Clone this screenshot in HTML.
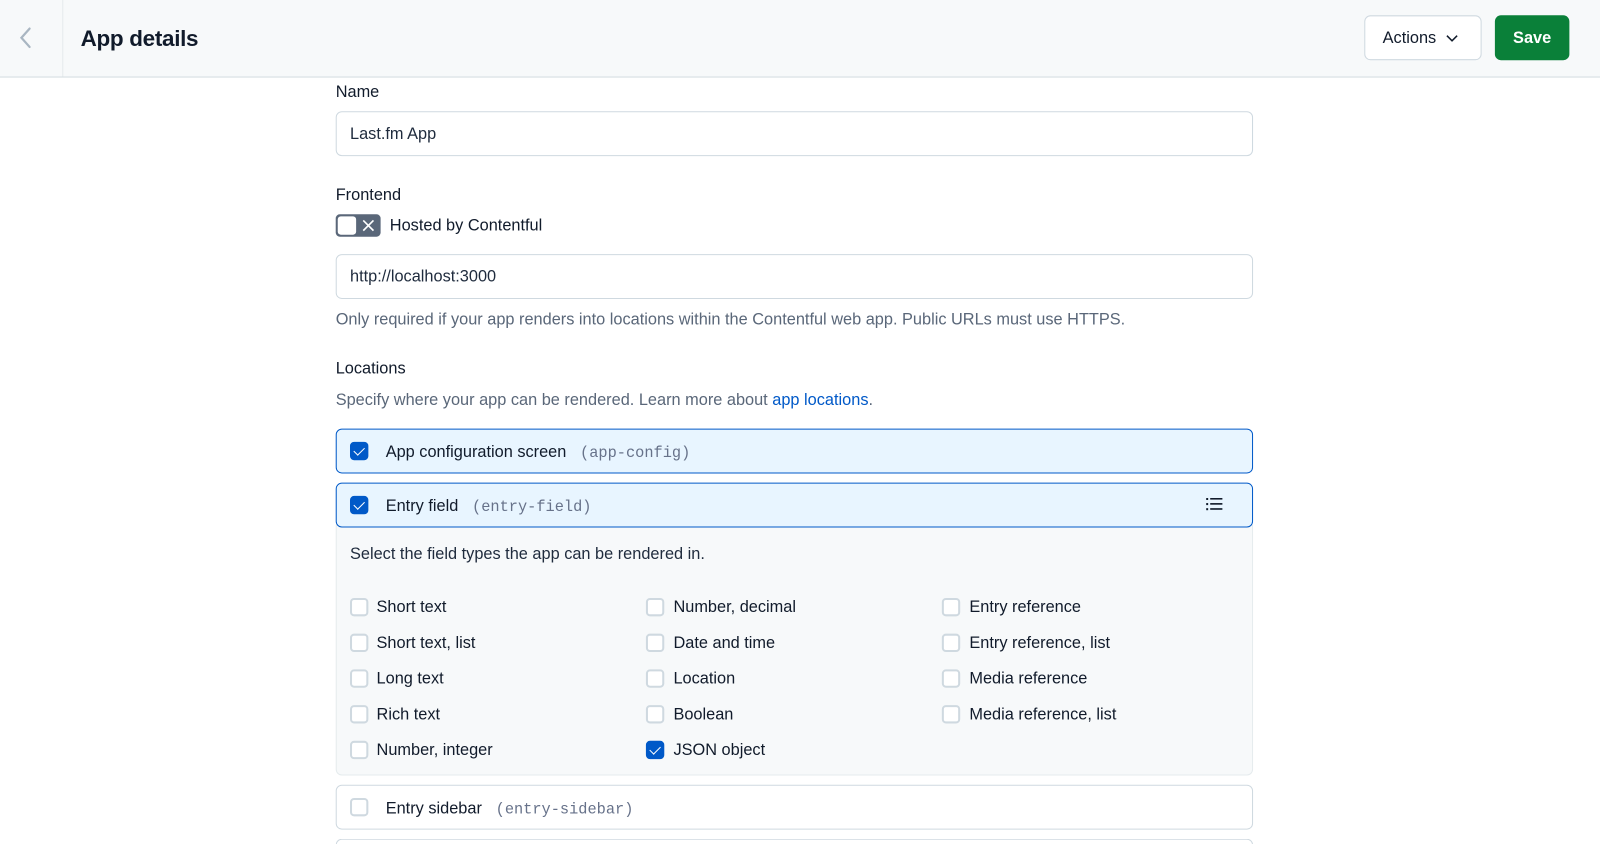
<!DOCTYPE html>
<html style="width:1600px;height:844px;overflow:hidden"><head><meta charset="utf-8"><style>
*{box-sizing:border-box;margin:0;padding:0}
body{width:1600px;height:844px;overflow:hidden;background:#fff;font-family:"Liberation Sans",sans-serif;color:#111b2b;font-size:16px;position:relative}
#w{position:absolute;left:0;top:0;width:1600px;height:844px;transform:scale(1.0204);transform-origin:0 0}
.a{position:absolute}
.hdr{left:0;top:0;width:1600px;height:76px;background:#f7f9fa;border-bottom:1px solid #d3dce0}
.lbl{font-size:16px;line-height:18px;padding-top:2px}
.inp{left:329px;width:899px;height:44px;border:1px solid #cfd9e0;border-radius:6px;background:#fff;padding:1px 13px 0;line-height:42px;font-size:16px;color:#1f2b3d}
.help{color:#5a6779;font-size:16px;line-height:18px;padding-top:2px}
.box{left:329px;width:899px;height:44px;border-radius:6px;border:1px solid #cfd9e0;background:#fff}
.box.on{background:#e8f5ff;border-color:#0059c8}
.cb{width:18px;height:18px;border:2px solid #cfd9e0;border-radius:4px;background:#fff}
.cb.c{background:#0059c8;border-color:#0059c8}
.cb.c::after{content:"";position:absolute;left:4px;top:1px;width:5px;height:9px;border:solid #fff;border-width:0 1.6px 1.6px 0;transform:rotate(45deg)}
.mono{font-family:"Liberation Mono",monospace;color:#67728a;font-size:15px}
.t{font-size:16px;line-height:18px;padding-top:2px}
</style></head><body><div id="w">
<div class="a hdr"></div>
<div class="a" style="left:61px;top:0;width:1px;height:75px;background:#e5ebed"></div>
<svg class="a" style="left:16px;top:26px" width="18" height="22" viewBox="0 0 18 22"><path d="M13 2 L5 11 L13 20" fill="none" stroke="#a9b6c2" stroke-width="2.2" stroke-linecap="round"/></svg>
<div class="a" style="left:79px;top:24px;font-size:22px;font-weight:bold;line-height:28px;letter-spacing:-0.3px">App details</div>
<div class="a" style="left:1337px;top:15px;width:115px;height:44px;border:1px solid #cfd9e0;border-radius:6px;background:#fff;font-size:16px;line-height:44px;padding-left:17px">Actions</div>
<svg class="a" style="left:1416px;top:33px" width="14" height="10" viewBox="0 0 14 10"><path d="M2 2 L7 7 L12 2" fill="none" stroke="#111b2b" stroke-width="1.5"/></svg>
<div class="a" style="left:1465px;top:15px;width:73px;height:44px;border-radius:6px;background:#0a8039;color:#fff;font-weight:bold;font-size:16px;line-height:46px;text-align:center">Save</div>

<div class="a lbl" style="left:329px;top:80px">Name</div>
<div class="a inp" style="top:109px">Last.fm App</div>
<div class="a lbl" style="left:329px;top:181px">Frontend</div>
<div class="a" style="left:329px;top:210px;width:44px;height:22px;border-radius:4px;background:#5a6779"></div>
<div class="a" style="left:331px;top:212px;width:18px;height:18px;border-radius:3px;background:#fff"></div>
<svg class="a" style="left:354px;top:214px" width="14" height="14" viewBox="0 0 14 14"><path d="M2 2 L12 12 M12 2 L2 12" stroke="#fff" stroke-width="1.6"/></svg>
<div class="a t" style="left:382px;top:211px">Hosted by Contentful</div>
<div class="a inp" style="top:249px">http://localhost:3000</div>
<div class="a help" style="left:329px;top:303px">Only required if your app renders into locations within the Contentful web app. Public URLs must use HTTPS.</div>
<div class="a lbl" style="left:329px;top:351px">Locations</div>
<div class="a help" style="left:329px;top:382px">Specify where your app can be rendered. Learn more about <span style="color:#0059c8">app locations</span>.</div>

<div class="a box on" style="top:420px"></div>
<div class="a cb c" style="left:343px;top:433px"></div>
<div class="a t" style="left:378px;top:433px">App configuration screen <span class="mono">&nbsp;(app-config)</span></div>

<div class="a" style="left:329px;top:514px;width:899px;height:246px;background:#f7f9fa;border:1px solid #e5ebed;border-radius:0 0 6px 6px"></div>
<div class="a box on" style="top:473px"></div>
<div class="a cb c" style="left:343px;top:486px"></div>
<div class="a t" style="left:378px;top:486px">Entry field <span class="mono">&nbsp;(entry-field)</span></div>
<svg class="a" style="left:1182px;top:488px" width="16" height="13" viewBox="0 0 16 13"><g fill="#111b2b"><rect x="0" y="0" width="2" height="2"/><rect x="4" y="0" width="12" height="1.6"/><rect x="0" y="5" width="2" height="2"/><rect x="4" y="5" width="12" height="1.6"/><rect x="0" y="10" width="2" height="2"/><rect x="4" y="10" width="12" height="1.6"/></g></svg>
<div class="a t" style="left:343px;top:533px;color:#1f2b3d">Select the field types the app can be rendered in.</div>

<div class="a cb" style="left:343px;top:586px"></div><div class="a t" style="left:369px;top:585px">Short text</div>
<div class="a cb" style="left:343px;top:621px"></div><div class="a t" style="left:369px;top:620px">Short text, list</div>
<div class="a cb" style="left:343px;top:656px"></div><div class="a t" style="left:369px;top:655px">Long text</div>
<div class="a cb" style="left:343px;top:691px"></div><div class="a t" style="left:369px;top:690px">Rich text</div>
<div class="a cb" style="left:343px;top:726px"></div><div class="a t" style="left:369px;top:725px">Number, integer</div>

<div class="a cb" style="left:633px;top:586px"></div><div class="a t" style="left:660px;top:585px">Number, decimal</div>
<div class="a cb" style="left:633px;top:621px"></div><div class="a t" style="left:660px;top:620px">Date and time</div>
<div class="a cb" style="left:633px;top:656px"></div><div class="a t" style="left:660px;top:655px">Location</div>
<div class="a cb" style="left:633px;top:691px"></div><div class="a t" style="left:660px;top:690px">Boolean</div>
<div class="a cb c" style="left:633px;top:726px"></div><div class="a t" style="left:660px;top:725px">JSON object</div>

<div class="a cb" style="left:923px;top:586px"></div><div class="a t" style="left:950px;top:585px">Entry reference</div>
<div class="a cb" style="left:923px;top:621px"></div><div class="a t" style="left:950px;top:620px">Entry reference, list</div>
<div class="a cb" style="left:923px;top:656px"></div><div class="a t" style="left:950px;top:655px">Media reference</div>
<div class="a cb" style="left:923px;top:691px"></div><div class="a t" style="left:950px;top:690px">Media reference, list</div>

<div class="a box" style="top:769px"></div>
<div class="a cb" style="left:343px;top:782px"></div>
<div class="a t" style="left:378px;top:782px">Entry sidebar <span class="mono">&nbsp;(entry-sidebar)</span></div>
<div class="a" style="left:329px;top:822px;width:899px;height:22px;border:1px solid #cfd9e0;border-bottom:none;border-radius:6px 6px 0 0;background:#fff"></div>
</div></body></html>
